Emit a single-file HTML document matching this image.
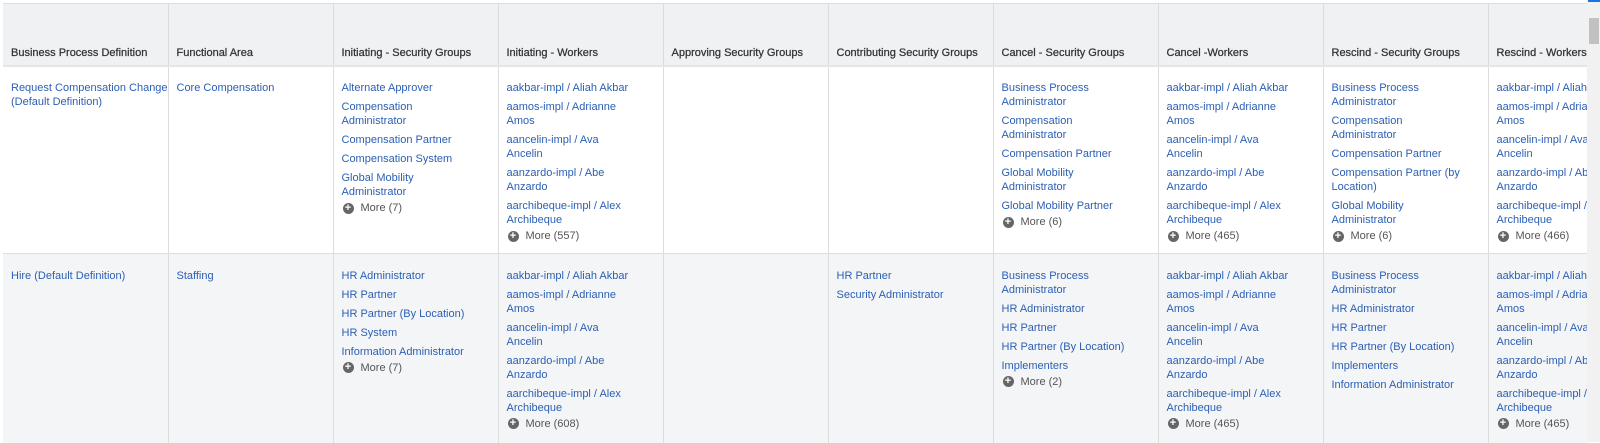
<!DOCTYPE html>
<html><head><style>
body{margin:0;width:1600px;height:442px;overflow:hidden;background:#fff;font-family:"Liberation Sans",sans-serif;font-size:11px;}
.wrap{position:absolute;left:3px;top:3px;width:1584px;height:439px;overflow:hidden;border-top:1px solid #ddd;}
table{border-collapse:collapse;table-layout:fixed;width:1650px;}
td,th{width:165px;box-sizing:border-box;border-right:1px solid #dcdcdc;vertical-align:top;text-align:left;padding:0 8px;}
th{background:#f0f1f2;height:62px;vertical-align:bottom;padding-bottom:6px;font-weight:normal;color:#333;-webkit-text-stroke:0.25px #333;border-bottom:2px solid #e4e5e7;}
td{height:187px;padding-top:14px;padding-right:27px;color:#2b5fb4;line-height:14px;}
td.f{padding-right:1px;white-space:nowrap;}
tr.r2 td{background:#f4f5f7;border-top:1px solid #ddd;height:200px;padding-top:15px;}
td div{margin-bottom:5px;}
td div.m{color:#555;margin-top:-3px;display:flex;align-items:center;}
.m i{display:inline-block;width:11px;height:11px;border-radius:50%;background:#666;color:#fff;font-style:normal;font-weight:bold;font-size:11px;line-height:11px;text-align:center;margin:0 7px 0 1px;}
.sb{position:absolute;left:1587px;top:0;width:13px;height:442px;background:#f1f1f1;}
.th{position:absolute;left:1589px;top:18px;width:10px;height:26px;background:#c1c1c1;}
.bl{position:absolute;left:1588px;top:0;width:12px;height:2px;background:#1a73e8;}
</style></head><body>
<div class="wrap"><table>
<tr><th>Business Process Definition</th><th>Functional Area</th><th>Initiating - Security Groups</th><th>Initiating - Workers</th><th>Approving Security Groups</th><th>Contributing Security Groups</th><th>Cancel - Security Groups</th><th>Cancel -Workers</th><th>Rescind - Security Groups</th><th>Rescind - Workers</th></tr>
<tr>
<td class="f"><div>Request Compensation Change<br>(Default Definition)</div></td>
<td><div>Core Compensation</div></td>
<td><div>Alternate Approver</div><div>Compensation Administrator</div><div>Compensation Partner</div><div>Compensation System</div><div>Global Mobility Administrator</div><div class="m"><i>+</i>More (7)</div></td>
<td><div>aakbar-impl / Aliah Akbar</div><div>aamos-impl / Adrianne Amos</div><div>aancelin-impl / Ava Ancelin</div><div>aanzardo-impl / Abe Anzardo</div><div>aarchibeque-impl / Alex Archibeque</div><div class="m"><i>+</i>More (557)</div></td>
<td></td><td></td>
<td><div>Business Process Administrator</div><div>Compensation Administrator</div><div>Compensation Partner</div><div>Global Mobility Administrator</div><div>Global Mobility Partner</div><div class="m"><i>+</i>More (6)</div></td>
<td><div>aakbar-impl / Aliah Akbar</div><div>aamos-impl / Adrianne Amos</div><div>aancelin-impl / Ava Ancelin</div><div>aanzardo-impl / Abe Anzardo</div><div>aarchibeque-impl / Alex Archibeque</div><div class="m"><i>+</i>More (465)</div></td>
<td><div>Business Process Administrator</div><div>Compensation Administrator</div><div>Compensation Partner</div><div>Compensation Partner (by<br>Location)</div><div>Global Mobility Administrator</div><div class="m"><i>+</i>More (6)</div></td>
<td><div>aakbar-impl / Aliah Akbar</div><div>aamos-impl / Adrianne Amos</div><div>aancelin-impl / Ava Ancelin</div><div>aanzardo-impl / Abe Anzardo</div><div>aarchibeque-impl / Alex Archibeque</div><div class="m"><i>+</i>More (466)</div></td>
</tr>
<tr class="r2">
<td class="f"><div>Hire (Default Definition)</div></td>
<td><div>Staffing</div></td>
<td><div>HR Administrator</div><div>HR Partner</div><div>HR Partner (By Location)</div><div>HR System</div><div>Information Administrator</div><div class="m"><i>+</i>More (7)</div></td>
<td><div>aakbar-impl / Aliah Akbar</div><div>aamos-impl / Adrianne Amos</div><div>aancelin-impl / Ava Ancelin</div><div>aanzardo-impl / Abe Anzardo</div><div>aarchibeque-impl / Alex Archibeque</div><div class="m"><i>+</i>More (608)</div></td>
<td></td>
<td><div>HR Partner</div><div>Security Administrator</div></td>
<td><div>Business Process Administrator</div><div>HR Administrator</div><div>HR Partner</div><div>HR Partner (By Location)</div><div>Implementers</div><div class="m"><i>+</i>More (2)</div></td>
<td><div>aakbar-impl / Aliah Akbar</div><div>aamos-impl / Adrianne Amos</div><div>aancelin-impl / Ava Ancelin</div><div>aanzardo-impl / Abe Anzardo</div><div>aarchibeque-impl / Alex Archibeque</div><div class="m"><i>+</i>More (465)</div></td>
<td><div>Business Process Administrator</div><div>HR Administrator</div><div>HR Partner</div><div>HR Partner (By Location)</div><div>Implementers</div><div>Information Administrator</div></td>
<td><div>aakbar-impl / Aliah Akbar</div><div>aamos-impl / Adrianne Amos</div><div>aancelin-impl / Ava Ancelin</div><div>aanzardo-impl / Abe Anzardo</div><div>aarchibeque-impl / Alex Archibeque</div><div class="m"><i>+</i>More (465)</div></td>
</tr>
</table></div>
<div class="sb"></div><div class="th"></div><div class="bl"></div>
</body></html>
